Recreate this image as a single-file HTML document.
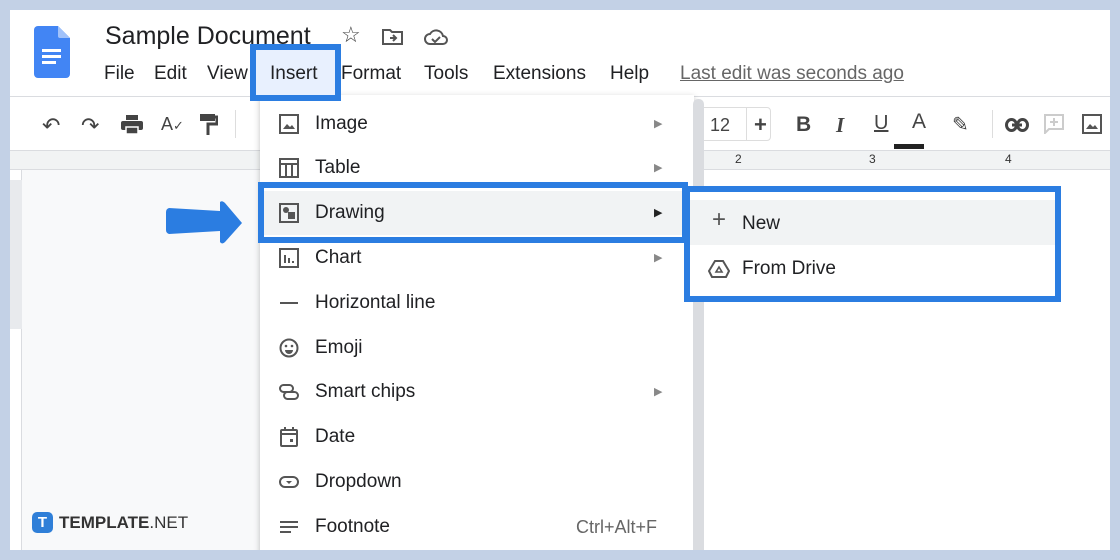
<!DOCTYPE html>
<html><head><style>
*{margin:0;padding:0;box-sizing:border-box}
body{width:1120px;height:560px;background:#c3d1e6;position:relative;overflow:hidden;font-family:"Liberation Sans",Arial,sans-serif;color:#202124}
.a{position:absolute}
.menu{font-size:15px}
.it{position:absolute;left:0;width:430px;height:44px;line-height:44px}
.it .t{position:absolute;left:55px;font-size:19px;color:#202124}
.it .ic{position:absolute;left:19px;top:12px;width:20px;height:20px}
.arr{position:absolute;left:394px;top:0;font-size:11px;color:#888}
.tb{position:absolute;top:112px;font-size:20px;color:#444}
</style></head><body>
<div class="a" style="left:10px;top:10px;width:1100px;height:540px;background:#fff;overflow:hidden">
 <svg class="a" style="left:24px;top:16px" width="36" height="52" viewBox="0 0 36 52"><path d="M4 0h20l12 12v36a4 4 0 0 1-4 4H4a4 4 0 0 1-4-4V4a4 4 0 0 1 4-4z" fill="#4285f4"/><path d="M24 0l12 12H26a2 2 0 0 1-2-2z" fill="#a1c2fa"/><rect x="8" y="23" width="19" height="3" fill="#fff"/><rect x="8" y="29" width="19" height="3" fill="#fff"/><rect x="8" y="35" width="14" height="3" fill="#fff"/></svg>
 <div class="a" style="left:95px;top:12px;font-size:25px;color:#202124">Sample Document</div>
 <div class="a" style="left:331px;top:12px;font-size:22px;color:#444">☆</div>
 <svg class="a" style="left:372px;top:18px" width="22" height="18" viewBox="0 0 22 18"><path d="M1 2h7l2 2h10v12H1z" fill="none" stroke="#555" stroke-width="2"/><path d="M8 10h6M11 7l3 3-3 3" stroke="#555" stroke-width="2" fill="none"/></svg>
 <svg class="a" style="left:414px;top:18px" width="24" height="18" viewBox="0 0 24 18"><path d="M6 16a5 5 0 0 1 0-10 7 7 0 0 1 13 2 4 4 0 0 1 0 8z" fill="none" stroke="#555" stroke-width="2"/><path d="M8 11l3 3 5-5" fill="none" stroke="#555" stroke-width="2"/></svg>
 <div class="a" style="top:53px;left:94px;font-size:19px;color:#202124;word-spacing:0">
  <span class="a" style="left:0">File</span><span class="a" style="left:50px">Edit</span><span class="a" style="left:103px">View</span><span class="a" style="left:237px">Format</span><span class="a" style="left:320px">Tools</span><span class="a" style="left:389px">Extensions</span><span class="a" style="left:506px">Help</span><span class="a" style="left:576px;color:#666;text-decoration:underline;white-space:nowrap">Last&nbsp;edit&nbsp;was&nbsp;seconds&nbsp;ago</span>
 </div>
 <div class="a" style="left:0;top:86px;width:1100px;height:1px;background:#dadce0"></div>
 <div class="tb" style="left:32px;top:103px;font-size:22px">↶</div>
 <div class="tb" style="left:71px;top:103px;font-size:22px">↷</div>
 <svg class="a" style="left:111px;top:105px" width="22" height="20" viewBox="0 0 22 20"><rect x="5" y="0" width="12" height="5" fill="#444"/><rect x="0" y="6" width="22" height="9" rx="2" fill="#444"/><rect x="5" y="12" width="12" height="7" fill="#444" stroke="#fff" stroke-width="1.5"/></svg>
 <div class="tb" style="left:151px;top:104px;font-size:18px">A<span style="font-size:13px">✓</span></div>
 <svg class="a" style="left:190px;top:104px" width="18" height="22" viewBox="0 0 18 22"><rect x="0" y="0" width="15" height="7" fill="#444"/><path d="M15 3h2v7H8v11" fill="none" stroke="#444" stroke-width="3"/></svg>
 <div class="a" style="left:225px;top:100px;width:1px;height:28px;background:#ddd"></div>
 <div class="a" style="left:655px;top:97px;width:106px;height:34px;border:1px solid #ddd;border-radius:4px"></div>
 <div class="a" style="left:736px;top:97px;width:1px;height:34px;background:#ddd"></div>
 <div class="tb" style="left:700px;top:105px;font-size:18px">12</div>
 <div class="tb" style="left:744px;top:102px;font-size:22px;font-weight:bold">+</div>
 <div class="tb" style="left:786px;top:103px;font-size:21px;font-weight:bold">B</div>
 <div class="tb" style="left:826px;top:103px;font-size:21px;font-style:italic;font-family:'Liberation Serif',serif;font-weight:bold">I</div>
 <div class="tb" style="left:864px;top:102px;font-size:20px;text-decoration:underline">U</div>
 <div class="tb" style="left:902px;top:100px;font-size:21px">A</div>
 <div class="a" style="left:884px;top:134px;width:30px;height:5px;background:#222"></div>
 <div class="tb" style="left:942px;top:102px;font-size:20px">✎</div>
 <div class="a" style="left:982px;top:100px;width:1px;height:28px;background:#ddd"></div>
 <svg class="a" style="left:995px;top:108px" width="24" height="14" viewBox="0 0 24 14"><rect x="1.5" y="1.5" width="10" height="11" rx="5.5" fill="none" stroke="#444" stroke-width="3"/><rect x="12.5" y="1.5" width="10" height="11" rx="5.5" fill="none" stroke="#444" stroke-width="3"/><rect x="7" y="5.5" width="10" height="3" fill="#444"/></svg>
 <svg class="a" style="left:1034px;top:104px" width="20" height="20" viewBox="0 0 20 20"><path d="M1 1h18v14H5l-4 4z" fill="none" stroke="#ccc" stroke-width="2"/><path d="M10 4v8M6 8h8" stroke="#ccc" stroke-width="2"/></svg>
 <svg class="a" style="left:1072px;top:104px" width="20" height="20" viewBox="0 0 20 20"><rect x="1" y="1" width="18" height="18" fill="none" stroke="#555" stroke-width="2"/><path d="M4 15l4-5 3 3 2-2 3 4z" fill="#555"/></svg>
 <div class="a" style="left:0;top:140px;width:1100px;height:20px;background:#f1f3f4;border-top:1px solid #dadce0;border-bottom:1px solid #dadce0"></div>
 <div class="a" style="left:0;top:142px;width:1100px;font-size:12px;color:#333">
  <span class="a" style="left:725px">2</span><span class="a" style="left:859px">3</span><span class="a" style="left:995px">4</span>
 </div>
 <div class="a" style="left:0;top:160px;width:1100px;height:380px;background:#f8f9fa"></div>
 <div class="a" style="left:0;top:160px;width:12px;height:380px;background:#fff;border-right:1px solid #dadce0"></div>
 <div class="a" style="left:0;top:170px;width:12px;height:149px;background:#e8eaed"></div>
 <div class="a" style="left:687px;top:160px;width:413px;height:380px;background:#fff"></div>
 <div class="a" style="left:22px;top:502px;width:21px;height:21px;border-radius:5px;background:#2f7fd8;color:#fff;font-weight:bold;font-size:15px;text-align:center;line-height:21px">T</div>
 <div class="a" style="left:49px;top:503px;font-size:17px;font-weight:bold;color:#333">TEMPLATE<span style="font-weight:normal">.NET</span></div>
 <svg class="a" style="left:156px;top:190px" width="80" height="46" viewBox="0 0 80 46"><path d="M3 8 L54 11 L54 2 Q56 0 59 3 L76 23 L59 42 Q56 45 54 42 L54 31 L3 34 Q0 33 0 30 V12 Q0 9 3 8z" fill="#2b7de1"/></svg>
 <div class="a menu" style="left:250px;top:85px;width:434px;height:460px;background:#fff;box-shadow:0 2px 6px rgba(0,0,0,.25)">
  <div class="a" style="left:433px;top:4px;width:11px;height:460px;background:#dadce0;border-radius:5px"></div>
  <div class="it" style="top:7px"><svg class="ic" viewBox="0 0 20 20"><rect x="1" y="1" width="18" height="18" fill="none" stroke="#555" stroke-width="2"/><path d="M4 15l4-5 3 3 2-2 3 4z" fill="#555"/></svg><span class="t">Image</span><span class="arr">▶</span></div>
  <div class="it" style="top:51px"><svg class="ic" viewBox="0 0 20 20"><rect x="1" y="1" width="18" height="18" fill="none" stroke="#555" stroke-width="2"/><path d="M1 6h18M7 6v13M13 6v13" stroke="#555" stroke-width="2"/></svg><span class="t">Table</span><span class="arr">▶</span></div>
  <div class="it" style="top:96px;background:#f1f3f4"><svg class="ic" viewBox="0 0 20 20"><rect x="1" y="1" width="18" height="18" fill="none" stroke="#555" stroke-width="2"/><circle cx="7" cy="7" r="3" fill="#555"/><rect x="9" y="9" width="7" height="7" fill="#555"/></svg><span class="t">Drawing</span><span class="arr" style="color:#222">▶</span></div>
  <div class="it" style="top:141px"><svg class="ic" viewBox="0 0 20 20"><rect x="1" y="1" width="18" height="18" fill="none" stroke="#555" stroke-width="2"/><path d="M6 7v8M10 10v5M14 13v2" stroke="#555" stroke-width="2"/></svg><span class="t">Chart</span><span class="arr">▶</span></div>
  <div class="it" style="top:186px"><svg class="ic" viewBox="0 0 20 20"><path d="M1 10h18" stroke="#555" stroke-width="2"/></svg><span class="t">Horizontal line</span></div>
  <div class="it" style="top:231px"><svg class="ic" viewBox="0 0 20 20"><circle cx="10" cy="10" r="8.5" fill="none" stroke="#555" stroke-width="2"/><circle cx="7" cy="8" r="1.3" fill="#555"/><circle cx="13" cy="8" r="1.3" fill="#555"/><path d="M6 12h8a4 4 0 0 1-8 0" fill="#555"/></svg><span class="t">Emoji</span></div>
  <div class="it" style="top:275px"><svg class="ic" viewBox="0 0 20 20"><rect x="1" y="3" width="13" height="7" rx="3.5" fill="none" stroke="#555" stroke-width="2"/><rect x="5" y="10" width="14" height="7" rx="3.5" fill="#fff" stroke="#555" stroke-width="2"/></svg><span class="t">Smart chips</span><span class="arr">▶</span></div>
  <div class="it" style="top:320px"><svg class="ic" viewBox="0 0 20 20"><rect x="2" y="3" width="16" height="16" rx="1" fill="none" stroke="#555" stroke-width="2"/><path d="M2 7h16M6 0v4M14 0v4" stroke="#555" stroke-width="2"/><rect x="11" y="12" width="3" height="3" fill="#555"/></svg><span class="t">Date</span></div>
  <div class="it" style="top:365px"><svg class="ic" viewBox="0 0 20 20"><rect x="1" y="5" width="18" height="10" rx="5" fill="none" stroke="#555" stroke-width="2"/><path d="M7 9h6l-3 3z" fill="#555"/></svg><span class="t">Dropdown</span></div>
  <div class="it" style="top:410px"><svg class="ic" viewBox="0 0 20 20"><path d="M1 5h18M1 10h18M1 15h11" stroke="#555" stroke-width="2"/></svg><span class="t">Footnote</span><span class="a" style="left:316px;font-size:18px;color:#666">Ctrl+Alt+F</span></div>
 </div>
 <div class="a" style="left:240px;top:34px;width:91px;height:57px;border:6px solid #2b7de1;background:#e8f0fe"></div>
 <div class="a" style="left:260px;top:53px;font-size:19px;color:#202124">Insert</div>
 <div class="a" style="left:248px;top:172px;width:430px;height:61px;border:6px solid #2b7de1"></div>
 <div class="a" style="left:674px;top:176px;width:377px;height:116px;border:6px solid #2b7de1;background:#fff">
  <div class="a" style="left:0;top:8px;width:365px;height:45px;background:#f1f3f4"></div>
  <div class="a" style="left:22px;top:14px;font-size:24px;color:#555;font-weight:300">+</div>
  <div class="a" style="left:52px;top:21px;font-size:19px">New</div>
  <svg class="a" style="left:18px;top:67px" width="22" height="20" viewBox="0 0 22 20"><path d="M7 2h8l6 10-3 6H4l-3-6z" fill="none" stroke="#555" stroke-width="2"/><path d="M11 8l3 5H8z" fill="none" stroke="#555" stroke-width="1.6"/></svg>
  <div class="a" style="left:52px;top:66px;font-size:19px">From Drive</div>
 </div>
</div>
</body></html>
